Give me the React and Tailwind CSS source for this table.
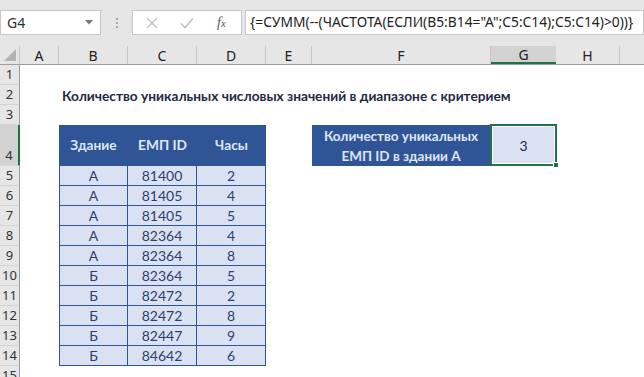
import React from 'react';

// ширины столбцов листа (A..H и хвост до края окна)
const COLS = [
  { key: 'A', w: 'w-[39px]' },
  { key: 'B', w: 'w-[69px]' },
  { key: 'C', w: 'w-[69px]' },
  { key: 'D', w: 'w-[69px]' },
  { key: 'E', w: 'w-[46px]' },
  { key: 'F', w: 'w-[179px]' },
  { key: 'G', w: 'w-[65px]' },
  { key: 'H', w: 'w-[64px]' },
];

const DATA = [
  ['А', '81400', 2],
  ['А', '81405', 4],
  ['А', '81405', 5],
  ['А', '82364', 4],
  ['А', '82364', 8],
  ['Б', '82364', 5],
  ['Б', '82472', 2],
  ['Б', '82472', 8],
  ['Б', '82447', 9],
  ['Б', '84642', 6],
];

const uiFont = { fontFamily: '"Noto Sans", "Open Sans", sans-serif' };
const cellFont = { fontFamily: 'Lato, "Liberation Sans", sans-serif' };

function RowNum({ n, h, active }) {
  return (
    <div
      className={`w-[20px] shrink-0 ${h} flex items-end justify-center text-[13px] leading-none text-[#333] border-b border-[#d4d4d4] ${
        active ? 'bg-[#d2d2d2] border-r-2 border-r-[#217346]' : 'bg-[#e6e6e6] border-r border-r-[#9e9e9e]'
      }`}
      style={uiFont}
    >
      <span className="mb-[3px]">{n}</span>
    </div>
  );
}

function FormulaBar() {
  return (
    <div className="h-[43px] bg-[#e6e6e6] pt-[10px] flex items-start" style={uiFont}>
      {/* поле имени */}
      <div className="w-[101px] h-[25px] bg-white border border-[#c6c6c6] flex items-center justify-between pl-[6px] pr-[7px] text-[14px] text-[#333]">
        <span>G4</span>
        <svg width="8" height="5" viewBox="0 0 8 5">
          <path d="M0 0h8L4 4.5z" fill="#777" />
        </svg>
      </div>
      <div className="w-[31px] h-[25px] flex flex-col items-center justify-center gap-[2px]">
        <span className="w-[2px] h-[2px] bg-[#a8a8a8]" />
        <span className="w-[2px] h-[2px] bg-[#a8a8a8]" />
        <span className="w-[2px] h-[2px] bg-[#a8a8a8]" />
      </div>
      {/* кнопки отмены / ввода / функции */}
      <div className="w-[110px] h-[25px] bg-white border border-[#c6c6c6] flex items-center pl-[13px]">
        <svg width="12" height="12" viewBox="0 0 12 12" className="mr-[22px]">
          <path d="M1 1l10 10M11 1L1 11" stroke="#c2c2c2" strokeWidth="1.3" />
        </svg>
        <svg width="14" height="12" viewBox="0 0 14 12" className="mr-[23px]">
          <path d="M1 6.5l4 4L13 1.5" stroke="#c2c2c2" strokeWidth="1.6" fill="none" />
        </svg>
        <span
          className="text-[14px] italic text-[#555] leading-none"
          style={{ fontFamily: '"Liberation Serif", serif' }}
        >
          f<span className="text-[11px]">x</span>
        </span>
      </div>
      <div className="ml-[3px] flex-1 h-[25px] bg-white border border-[#c6c6c6] flex items-center pl-[4px] text-[13.8px] text-[#222] whitespace-nowrap overflow-hidden">
        {'{=СУММ(--(ЧАСТОТА(ЕСЛИ(B5:B14="A";C5:C14);C5:C14)>0))}'}
      </div>
    </div>
  );
}

function ColumnHeaders() {
  return (
    <div className="h-[22px] flex bg-[#e6e6e6] border-b border-[#9e9e9e]" style={uiFont}>
      <div className="w-[20px] shrink-0 relative border-r border-[#c6c6c6] mt-[3px]">
        <svg width="12" height="12" viewBox="0 0 12 12" className="absolute right-[3px] bottom-[3px]">
          <path d="M12 0V12H0z" fill="#b4b4b4" />
        </svg>
      </div>
      {COLS.map((c) => (
        <div
          key={c.key}
          className={`${c.w} shrink-0 flex items-center justify-center text-[14px] text-[#222] ${
            c.key === 'G'
              ? 'bg-[#d2d2d2] border-b-2 border-[#217346] mt-[3px]'
              : 'border-r border-[#c6c6c6] mt-[3px]'
          }`}
        >
          {c.key}
        </div>
      ))}
      <div className="flex-1" />
    </div>
  );
}

export default function App() {
  return (
    <div className="w-[644px] h-[377px] overflow-hidden bg-white">
      <FormulaBar />
      <ColumnHeaders />

      {/* строки 1–3 */}
      <div className="flex">
        <RowNum n={1} h="h-[20px]" />
      </div>
      <div className="flex">
        <RowNum n={2} h="h-[20px]" />
        <div className="w-[39px] shrink-0" />
        <div
          className="pl-[3px] pt-[3px] text-[13.7px] font-bold text-[#1f2a44] whitespace-nowrap leading-[16px]"
          style={cellFont}
        >
          Количество уникальных числовых значений в диапазоне с критерием
        </div>
      </div>
      <div className="flex">
        <RowNum n={3} h="h-[20px]" />
      </div>

      {/* строка 4: заголовки таблицы и итог */}
      <div className="flex" style={cellFont}>
        <RowNum n={4} h="h-[41px]" active />
        <div className="w-[39px] shrink-0" />
        <div className="w-[207px] shrink-0 h-[41px] bg-[#2f5597] flex items-center text-[13.7px] font-bold text-[#dfe5f3]">
          <div className="w-[69px] text-center">Здание</div>
          <div className="w-[69px] text-center">ЕМП ID</div>
          <div className="w-[69px] text-center">Часы</div>
        </div>
        <div className="w-[46px] shrink-0" />
        <div className="w-[178px] shrink-0 h-[41px] bg-[#2f5597] flex flex-col items-center justify-center text-[13.5px] font-bold text-[#dfe5f3] leading-[20px]">
          <span>Количество уникальных</span>
          <span>ЕМП ID в здании А</span>
        </div>
        <div className="relative w-[67px] h-[42px] -mt-[1px] shrink-0 border-2 border-[#217346] bg-white p-[1px]">
          <div className="w-full h-full bg-[#d9e1f2] flex items-center justify-center text-[14px] text-[#1f2a44]">
            3
          </div>
          <span className="absolute -right-[4px] -bottom-[4px] w-[6px] h-[6px] bg-[#217346] border border-white" />
        </div>
      </div>

      {/* строки 5–14: данные */}
      {DATA.map((r, i) => (
        <div key={i} className="flex" style={cellFont}>
          <RowNum n={i + 5} h="h-[20px]" />
          <div className="w-[39px] shrink-0" />
          <div className="flex h-[20px] text-[14px] text-[#2f3f6b] leading-none">
            <div className="w-[69px] bg-[#d9e1f2] border-l border-r border-b border-[#2f5597] flex items-center justify-center">
              {r[0]}
            </div>
            <div className="w-[69px] bg-[#d9e1f2] border-r border-b border-[#2f5597] flex items-center justify-center">
              {r[1]}
            </div>
            <div className="w-[69px] bg-[#d9e1f2] border-r border-b border-[#2f5597] flex items-center justify-center">
              {r[2]}
            </div>
          </div>
        </div>
      ))}

      <div className="flex">
        <RowNum n={15} h="h-[20px]" />
      </div>
    </div>
  );
}
